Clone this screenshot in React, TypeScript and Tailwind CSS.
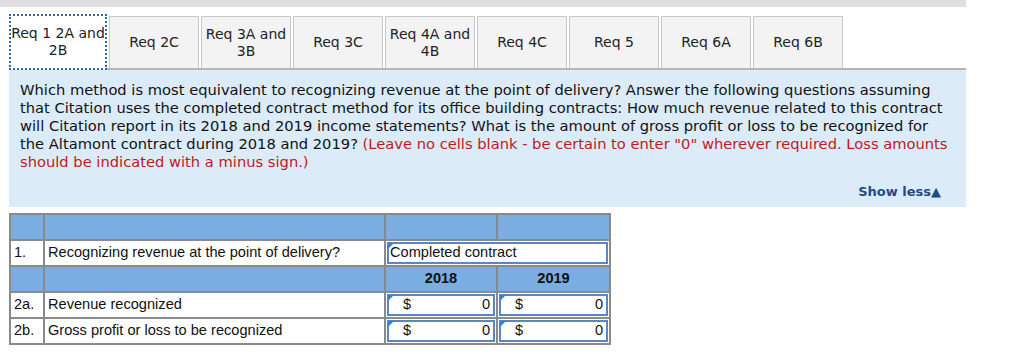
import React from 'react'

const tabs = [
  { label: ['Req 1 2A and', '2B'], active: true },
  { label: ['Req 2C'] },
  { label: ['Req 3A and', '3B'] },
  { label: ['Req 3C'] },
  { label: ['Req 4A and', '4B'] },
  { label: ['Req 4C'] },
  { label: ['Req 5'] },
  { label: ['Req 6A'] },
  { label: ['Req 6B'] },
]

function Marker() {
  return (
    <span className="absolute -left-[1px] -top-[1px] w-0 h-0 border-t-[6px] border-t-[#3f7fd0] border-r-[6px] border-r-transparent" />
  )
}

function InputBox({ children }: { children: React.ReactNode }) {
  return (
    <div className="relative h-[22px] bg-white border-2 border-[#5a87c4] flex items-center px-[1px]">
      <Marker />
      {children}
    </div>
  )
}

function MoneyCell() {
  return (
    <td className="border-2 border-[#8a8a8a] p-[1px]">
      <InputBox>
        <div className="flex w-full items-center justify-between pl-[13px] pr-[2px]">
          <span>$</span>
          <span>0</span>
        </div>
      </InputBox>
    </td>
  )
}

export default function App() {
  return (
    <div className="w-[1024px] h-[354px] bg-white overflow-hidden">
      <div className="w-[966px] h-[7px] bg-[#e0e0e0]" />
      <div className="pl-[9px] w-[966px]">
        <div className="flex items-end gap-[2px] mt-[7px] font-['DejaVu_Sans',sans-serif] text-[14px] text-[#222] leading-[17px]">
          {tabs.map((t, i) =>
            t.active ? (
              <div
                key={i}
                className="w-[98px] h-[56px] bg-white border-2 border-dotted border-[#2f66b3] flex flex-col items-center justify-center text-center whitespace-nowrap"
              >
                {t.label.map((l, j) => (
                  <span key={j}>{l}</span>
                ))}
              </div>
            ) : (
              <div
                key={i}
                className="w-[90px] h-[52px] mb-[2px] bg-[#f3f3f3] border border-[#c9c9c9] border-b-0 flex flex-col items-center justify-center text-center whitespace-nowrap"
              >
                {t.label.map((l, j) => (
                  <span key={j}>{l}</span>
                ))}
              </div>
            )
          )}
        </div>
        <div className="-mt-[2px] border-t-2 border-[#b5b5b5] bg-[#dcebf8] h-[139px] pl-[11px] pr-[6px] pt-[11px] font-['DejaVu_Sans',sans-serif] text-[14.7px] leading-[18px] text-[#111] whitespace-nowrap">
          <p>
            Which method is most equivalent to recognizing revenue at the point of delivery? Answer the following questions assuming
            <br />
            that Citation uses the completed contract method for its office building contracts: How much revenue related to this contract
            <br />
            will Citation report in its 2018 and 2019 income statements? What is the amount of gross profit or loss to be recognized for
            <br />
            the Altamont contract during 2018 and 2019?{' '}
            <span className="text-[#c4161c]">
              (Leave no cells blank - be certain to enter "0" wherever required. Loss amounts
              <br />
              should be indicated with a minus sign.)
            </span>
          </p>
          <div className="flex justify-end pr-[19px] mt-[12px]">
            <span className="font-bold text-[13px] text-[#1f4b87]">Show less▲</span>
          </div>
        </div>
        <table className="mt-[6px] border-collapse border-2 border-[#8a8a8a] font-['Liberation_Sans',Arial,sans-serif] text-[14.6px] text-[#111]">
          <tbody>
            <tr className="h-[26px] bg-[#7aade2]">
              <td className="w-[34px] border-2 border-[#8a8a8a]" />
              <td className="w-[341px] border-2 border-[#8a8a8a]" />
              <td className="w-[112px] border-2 border-[#8a8a8a]" />
              <td className="w-[113px] border-2 border-[#8a8a8a]" />
            </tr>
            <tr className="h-[26px] bg-white">
              <td className="border-2 border-[#8a8a8a] pl-[3px]">1.</td>
              <td className="border-2 border-[#8a8a8a] pl-[3px] whitespace-nowrap">Recognizing revenue at the point of delivery?</td>
              <td colSpan={2} className="border-2 border-[#8a8a8a] p-[1px]">
                <InputBox>
                  <span>Completed contract</span>
                </InputBox>
              </td>
            </tr>
            <tr className="h-[26px] bg-[#7aade2]">
              <td className="border-2 border-[#8a8a8a]" />
              <td className="border-2 border-[#8a8a8a]" />
              <td className="border-2 border-[#8a8a8a] text-center font-bold">2018</td>
              <td className="border-2 border-[#8a8a8a] text-center font-bold">2019</td>
            </tr>
            <tr className="h-[26px] bg-white">
              <td className="border-2 border-[#8a8a8a] pl-[3px]">2a.</td>
              <td className="border-2 border-[#8a8a8a] pl-[3px]">Revenue recognized</td>
              <MoneyCell />
              <MoneyCell />
            </tr>
            <tr className="h-[26px] bg-white">
              <td className="border-2 border-[#8a8a8a] pl-[3px]">2b.</td>
              <td className="border-2 border-[#8a8a8a] pl-[3px]">Gross profit or loss to be recognized</td>
              <MoneyCell />
              <MoneyCell />
            </tr>
          </tbody>
        </table>
      </div>
    </div>
  )
}
